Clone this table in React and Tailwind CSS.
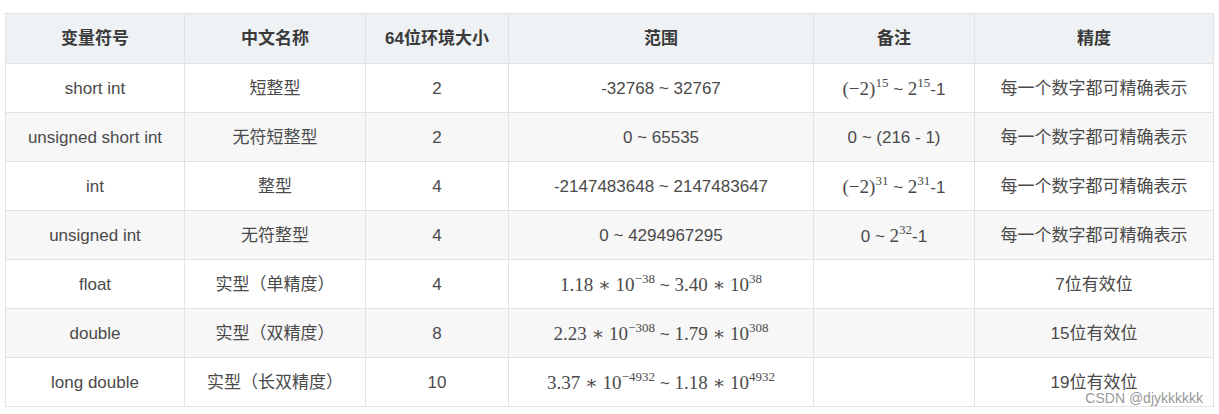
import React from 'react';

const Sup = ({ children }) => (
  <sup className="text-[13px] relative -top-[8px] align-baseline">{children}</sup>
);

const M = ({ children }) => (
  <span className="font-['Liberation_Serif','DejaVu_Serif',serif] text-[19px]">{children}</span>
);

const Exp = ({ a, b, c, d }) => (
  <span>
    <M>
      {a} ∗ 10<Sup>−{b}</Sup>
    </M>{' '}
    ~{' '}
    <M>
      {c} ∗ 10<Sup>{d}</Sup>
    </M>
  </span>
);

const Neg = ({ n }) => (
  <span>
    <M>
      (−2)<Sup>{n}</Sup>
    </M>{' '}
    ~ <M>2<Sup>{n}</Sup></M>-1
  </span>
);

const rows = [
  ['short int', '短整型', '2', '-32768 ~ 32767', <Neg n="15" />, '每一个数字都可精确表示'],
  ['unsigned short int', '无符短整型', '2', '0 ~ 65535', '0 ~ (216 - 1)', '每一个数字都可精确表示'],
  ['int', '整型', '4', '-2147483648 ~ 2147483647', <Neg n="31" />, '每一个数字都可精确表示'],
  [
    'unsigned int',
    '无符整型',
    '4',
    '0 ~ 4294967295',
    <span>
      0 ~ <M>2<Sup>32</Sup></M>-1
    </span>,
    '每一个数字都可精确表示',
  ],
  ['float', '实型（单精度）', '4', <Exp a="1.18" b="38" c="3.40" d="38" />, '', '7位有效位'],
  ['double', '实型（双精度）', '8', <Exp a="2.23" b="308" c="1.79" d="308" />, '', '15位有效位'],
  ['long double', '实型（长双精度）', '10', <Exp a="3.37" b="4932" c="1.18" d="4932" />, '', '19位有效位'],
];

const heads = ['变量符号', '中文名称', '64位环境大小', '范围', '备注', '精度'];
const widths = ['w-[179px]', 'w-[181px]', 'w-[143px]', 'w-[305px]', 'w-[161px]', 'w-[239px]'];

export default function App() {
  return (
    <div className="relative w-[1219px] h-[414px] bg-white pt-[13px] pl-[5px] font-['Liberation_Sans','Noto_Sans_CJK_SC',sans-serif] text-[17px] text-[#4a4a4a]">
      <table className="border-collapse table-fixed w-[1208px]">
        <thead>
          <tr className="h-[50px] bg-[#eef2f5]">
            {heads.map((h, i) => (
              <th key={i} className={`${widths[i]} border border-[#e2e2e2] font-bold text-[#3a3a3a] text-center`}>
                {h}
              </th>
            ))}
          </tr>
        </thead>
        <tbody>
          {rows.map((r, ri) => (
            <tr key={ri} className={`h-[49px] ${ri % 2 === 1 ? 'bg-[#f7f7f7]' : 'bg-white'}`}>
              {r.map((c, ci) => (
                <td key={ci} className="border border-[#e2e2e2] text-center whitespace-nowrap leading-none">
                  {c}
                </td>
              ))}
            </tr>
          ))}
        </tbody>
      </table>

      {/* watermark */}
      <div className="absolute right-[16px] top-[391px] text-[14px] text-[#999] leading-none">
        CSDN @djykkkkkk
      </div>
    </div>
  );
}
